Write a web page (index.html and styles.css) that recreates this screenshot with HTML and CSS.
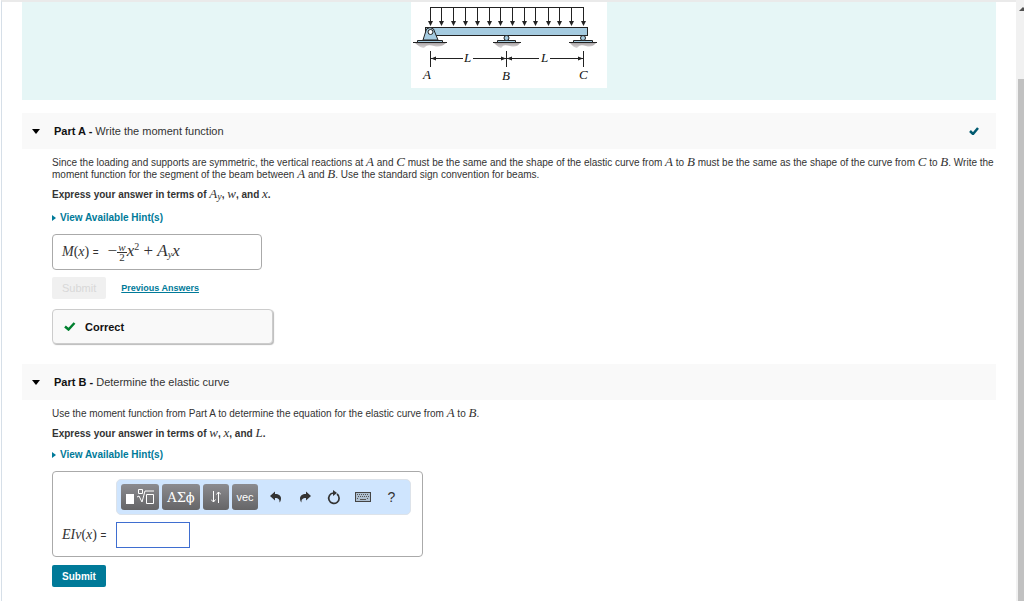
FILE: index.html
```html
<!DOCTYPE html>
<html lang="en">
<head>
  <meta charset="UTF-8" />
  <meta name="viewport" content="width=device-width, initial-scale=1.0"/>
  <title>Beam deflection</title>
  <link rel="stylesheet" href="styles.css">
</head>
<body>
  <main class="content">
    <section class="figure-band">
      <figure class="figure">
        <svg width="196" height="86" viewBox="411 2 196 86" role="img" aria-label="Beam with supports A, B and C">
          <defs>
            <linearGradient id="ground" x1="0" y1="0" x2="0" y2="1">
              <stop offset="0" stop-color="#a9a4a6"/>
              <stop offset="1" stop-color="#dedbdc"/>
            </linearGradient>
          </defs>
          <!-- distributed load -->
          <g stroke="#222" stroke-width="1">
            <path fill="none" d="M430 7.500H584M430.500 7V22M441.500 7V22M453.500 7V22M465.500 7V22M477.500 7V22M489.500 7V22M500.500 7V22M512.500 7V22M524.500 7V22M535.500 7V22M548.500 7V22M559.500 7V22M571.500 7V22M583.500 7V22"/>
            <path stroke="none" fill="#222" d="M428 21h5l-2.500 5zM439 21h5l-2.500 5zM451 21h5l-2.500 5zM463 21h5l-2.500 5zM475 21h5l-2.500 5zM487 21h5l-2.500 5zM498 21h5l-2.500 5zM510 21h5l-2.500 5zM522 21h5l-2.500 5zM533 21h5l-2.500 5zM546 21h5l-2.500 5zM557 21h5l-2.500 5zM569 21h5l-2.500 5zM581 21h5l-2.500 5z"/>
          </g>
          <!-- ground under the supports -->
          <g fill="url(#ground)">
            <path d="M415 43H446Q441 48 434 46T425 47T415 43z"/>
            <path d="M494 43H520Q517 48 510 46T502 47T494 43z"/>
            <path d="M570 43H596Q592 48 586 46T578 47T570 43z"/>
          </g>
          <path stroke="#222" d="M413 42.500H447M493 42.500H521M569 42.500H597"/>
          <!-- beam and supports -->
          <g fill="#a5cbe0" stroke="#222">
            <rect x="425.500" y="27.500" width="162" height="8"/>
            <path d="M417.500 40.500H442.500V42.500H417.500zM497.500 40.500H515.500V42.500H497.500zM573.500 40.500H592.500V42.500H573.500z"/>
            <path d="M423 40L426.500 29Q430 26 433.500 29L438 40z"/>
            <circle cx="430.500" cy="32" r="2.500" fill="#fff"/>
            <circle cx="506.500" cy="38" r="2.500"/>
            <circle cx="583" cy="38" r="2.500"/>
          </g>
          <!-- dimensions -->
          <path stroke="#222" fill="none" d="M430.500 51V67M506.500 51V67M583.500 51V67M431 58.500H463M473 58.500H539M550 58.500H583"/>
          <path fill="#222" d="M431 58.500l5-2v4zM506 58.500l-5-2v4zM507 58.500l5-2v4zM583 58.500l-5-2v4z"/>
          <g class="figure-text">
            <text x="464" y="62">L</text>
            <text x="541" y="62">L</text>
            <text x="423" y="79">A</text>
            <text x="502" y="80">B</text>
            <text x="579" y="79">C</text>
          </g>
        </svg>
      </figure>
    </section>

    <section class="part">
      <header class="part-header">
        <svg class="caret" width="8" height="5" viewBox="0 0 8 5"><path d="M0 0h8L4 5z"/></svg>
        <h2><strong>Part A -</strong> Write the moment function</h2>
        <svg class="done" width="10" height="8" viewBox="0 0 10 8"><path d="M1 4l3 3 5-6" fill="none" stroke="#005a70" stroke-width="2.500"/></svg>
      </header>
      <div class="part-body">
        <p>Since the loading and supports are symmetric, the vertical reactions at <i>A</i> and <i>C</i> must be the same and the shape of the elastic curve from <i>A</i> to <i>B</i> must be the same as the shape of the curve from <i>C</i> to <i>B</i>. Write the moment function for the segment of the beam between <i>A</i> and <i>B</i>. Use the standard sign convention for beams.</p>
        <p class="express">Express your answer in terms of <i>A<sub>y</sub></i>, <i>w</i>, and <i>x</i>.</p>
        <a class="hints" href="#hints-a"><svg width="4" height="6" viewBox="0 0 4 6"><path d="M0 0l4 3-4 3z"/></svg>View Available Hint(s)</a>
        <div class="answer answer-done">
          <span class="label"><i>M</i>(<i>x</i>) <small>=</small></span>
          <span class="formula">−<span class="frac"><i>w</i><span>2</span></span><i>x</i><sup>2</sup> + <i>A<sub>y</sub>x</i></span>
        </div>
        <div class="actions">
          <button type="button" class="submit" disabled>Submit</button>
          <a class="previous" href="#previous">Previous Answers</a>
        </div>
        <div class="feedback">
          <svg width="12" height="9" viewBox="0 0 12 9"><path d="M1 4.500l3.500 3 6-6.500" fill="none" stroke="#00802f" stroke-width="2.500"/></svg>
          <strong>Correct</strong>
        </div>
      </div>
    </section>

    <section class="part">
      <header class="part-header">
        <svg class="caret" width="8" height="5" viewBox="0 0 8 5"><path d="M0 0h8L4 5z"/></svg>
        <h2><strong>Part B -</strong> Determine the elastic curve</h2>
      </header>
      <div class="part-body">
        <p>Use the moment function from Part A to determine the equation for the elastic curve from <i>A</i> to <i>B</i>.</p>
        <p class="express">Express your answer in terms of <i>w</i>, <i>x</i>, and <i>L</i>.</p>
        <a class="hints" href="#hints-b"><svg width="4" height="6" viewBox="0 0 4 6"><path d="M0 0l4 3-4 3z"/></svg>View Available Hint(s)</a>
        <form class="answer editor" id="answerForm">
          <div class="toolbar">
            <button type="button" class="tool templates" aria-label="Templates">
              <svg width="30" height="18" viewBox="0 0 30 18">
                <rect x="1" y="6" width="8" height="10" fill="#fff"/>
                <path fill="none" stroke="#fff" d="M13.500 1.500h4v4h-4zM12 9l2-1 3 6 3-11h9M21.500 6.500h7v9h-7z"/>
              </svg>
            </button>
            <button type="button" class="tool greek">ΑΣϕ</button>
            <button type="button" class="tool arrows" aria-label="Arrows">
              <svg width="10" height="12" viewBox="0 0 10 12"><path fill="none" stroke="#fff" d="M2.500 0v11M0 8.500l2.500 2.500 2-2.500M7.500 12V1M5.500 3.500l2-2.500 2.500 2.500"/></svg>
            </button>
            <button type="button" class="tool vec">vec</button>
            <div class="icons">
              <button type="button" class="icon" aria-label="Undo">
                <svg width="12" height="12" viewBox="0 0 12 12"><path d="M0 5l5-4.500v2.500c4 0 6 2 6 4.500 0 1.500-.500 3-1.500 4 .300-3-.800-4.500-4.500-4.500V9.500z"/></svg>
              </button>
              <button type="button" class="icon" aria-label="Redo">
                <svg width="12" height="12" viewBox="0 0 12 12"><path d="M12 5L7 .5V3C3 3 1 5 1 7.500c0 1.500.500 3 1.500 4C2.200 8.500 3.300 7 7 7v2.500z"/></svg>
              </button>
              <button type="button" class="icon" aria-label="Reset">
                <svg width="14" height="15" viewBox="0 0 14 15"><path d="M10 4A5.200 5.200 0 1 1 6.500 3" fill="none" stroke="#333" stroke-width="1.700"/><path d="M6 0l4 3-4 3z"/></svg>
              </button>
              <button type="button" class="icon" aria-label="Keyboard">
                <svg width="16" height="10" viewBox="0 0 16 10"><rect x=".5" y=".5" width="15" height="9" fill="#aebfd0" stroke="#444"/><path fill="none" stroke="#555" stroke-dasharray="1 1" d="M2 2.500h12M3 4.500h11M2 6.500h2M12 6.500h2"/><path stroke="#555" d="M5 7.500h6"/></svg>
              </button>
              <button type="button" class="icon help">?</button>
            </div>
          </div>
          <label class="label" for="curve"><i>EIv</i>(<i>x</i>) <small>=</small></label>
          <input type="text" id="curve" name="curve">
        </form>
        <button type="submit" class="submit" form="answerForm">Submit</button>
      </div>
    </section>
  </main>
  <div class="scrollbar">
    <svg class="scroll-up" width="5" height="4" viewBox="0 0 5 4"><path d="M0 4l4-4 1 1v3z" fill="#505050"/></svg>
    <div class="thumb"></div>
  </div>
</body>
</html>
```
FILE: styles.css
```css
* {
  box-sizing: border-box;
}

body {
  margin: 0;
  display: flex;
  min-height: 100vh;
  font-family: "Liberation Sans", Arial, sans-serif;
  font-size: 10px;
  line-height: 12px;
  color: #333;
  background: #fff;
}

.content {
  flex: 1;
  margin-left: 1px;
  padding: 0 20px;
  border-left: 1px solid #d6dfe8;
  border-top: 2px solid #eaeaea;
}

.figure-band {
  height: 98px;
  background: #e6f6f6;
}

.figure {
  margin: 0 auto;
  width: 196px;
  background: #fff;
}

.figure svg {
  display: block;
}

.figure-text {
  font: italic 13px "Liberation Serif", serif;
  fill: #111;
}

.part {
  padding-top: 13px;
}

.part + .part {
  padding-top: 20px;
}

.part-header {
  display: flex;
  align-items: center;
  gap: 14px;
  height: 36px;
  padding: 0 17px 0 10px;
  background: #f9f9f9;
}

.part-header h2 {
  flex: 1;
  margin: 0;
  font-size: 11px;
  font-weight: normal;
}

.part-header strong {
  color: #111;
}

.part-body {
  padding: 8px 0 0 30px;
}

p {
  margin: 0 0 8px;
}

i,
.label,
.formula {
  font-family: "Liberation Serif", "Times New Roman", serif;
  font-weight: normal;
}

p i {
  font-size: 13px;
  line-height: 0;
}

sub,
sup {
  font-size: 10px;
  line-height: 0;
}

sub {
  vertical-align: -2px;
}

sup {
  vertical-align: 6px;
}

p sub {
  line-height: 12px;
}

.express {
  font-weight: bold;
}

.hints {
  display: flex;
  align-items: center;
  gap: 4px;
  margin-top: 9px;
  font-weight: bold;
  color: #007a99;
  text-decoration: none;
}

.hints svg {
  fill: #007a99;
}

.answer {
  border: 1px solid #aaa;
  border-radius: 4px;
  background: #fff;
}

.answer-done {
  display: flex;
  align-items: center;
  gap: 9px;
  width: 210px;
  height: 36px;
  margin-top: 10px;
  padding: 0 9px;
}

.label {
  font-size: 14px;
}

.label small {
  font: 10px "Liberation Sans", sans-serif;
}

.formula {
  font-size: 17px;
}

.frac {
  display: inline-flex;
  flex-direction: column;
  align-items: center;
  vertical-align: middle;
  font-size: 11px;
  line-height: 9px;
}

.frac span {
  border-top: 1px solid #333;
  padding: 0 2px;
}

.actions {
  display: flex;
  align-items: center;
  gap: 15px;
  margin: 7px 0 10px;
}

.submit {
  display: block;
  height: 22px;
  padding: 0 10px;
  border: none;
  border-radius: 2px;
  font: bold 10px "Liberation Sans", Arial, sans-serif;
  color: #fff;
  background: #007a99;
}

.submit:disabled {
  font-size: 11px;
  font-weight: normal;
  color: #d8d8d8;
  background: #f0f0f0;
}

.previous {
  font-size: 9px;
  font-weight: bold;
  color: #007a99;
}

.feedback {
  display: flex;
  align-items: center;
  gap: 9px;
  width: 221px;
  height: 35px;
  padding: 0 11px;
  border: 1px solid #ccc;
  border-radius: 4px;
  box-shadow: 1px 1px 1px #bbb;
  background: #f9f9f9;
  font-size: 11px;
  color: #111;
}

.editor {
  display: grid;
  grid-template-columns: 54px 1fr;
  align-items: center;
  row-gap: 7px;
  width: 371px;
  margin: 10px 0 8px;
  padding: 7px 11px 8px 9px;
}

.toolbar {
  grid-column: 2;
  display: flex;
  align-items: center;
  gap: 3px;
  height: 36px;
  padding: 0 4px;
  border: 1px solid #dde3ea;
  border-radius: 5px;
  background: #cfe5fe;
}

.toolbar button {
  display: flex;
  flex: none;
  align-items: center;
  justify-content: center;
  height: 26px;
  padding: 0;
  border: none;
  color: #fff;
}

.toolbar .tool {
  width: 26px;
  border-radius: 3px;
  background: linear-gradient(#8b8b8f, #656567);
}

.toolbar .templates,
.toolbar .greek {
  width: 38px;
}

.toolbar .greek {
  font: 13px "DejaVu Serif", serif;
}

.toolbar .vec {
  font: 11px "Liberation Sans", sans-serif;
}

.icons {
  flex: 1;
  display: flex;
  justify-content: space-around;
}

.toolbar .icon {
  width: 25px;
  background: none;
  color: #333;
  fill: #333;
}

.toolbar .help {
  font: 14px "Liberation Sans", sans-serif;
}

.editor input {
  width: 74px;
  height: 26px;
  padding: 0 4px;
  border: 1px solid #3f6ed0;
  font: 14px "Liberation Serif", serif;
}

.scrollbar {
  width: 8px;
  padding-top: 7px;
  background: #f1f1f1;
}

.scroll-up {
  display: block;
  margin: 0 0 68px auto;
}

.thumb {
  height: calc(100vh - 79px);
  margin-left: 2px;
  background: #c1c1c1;
}
```
